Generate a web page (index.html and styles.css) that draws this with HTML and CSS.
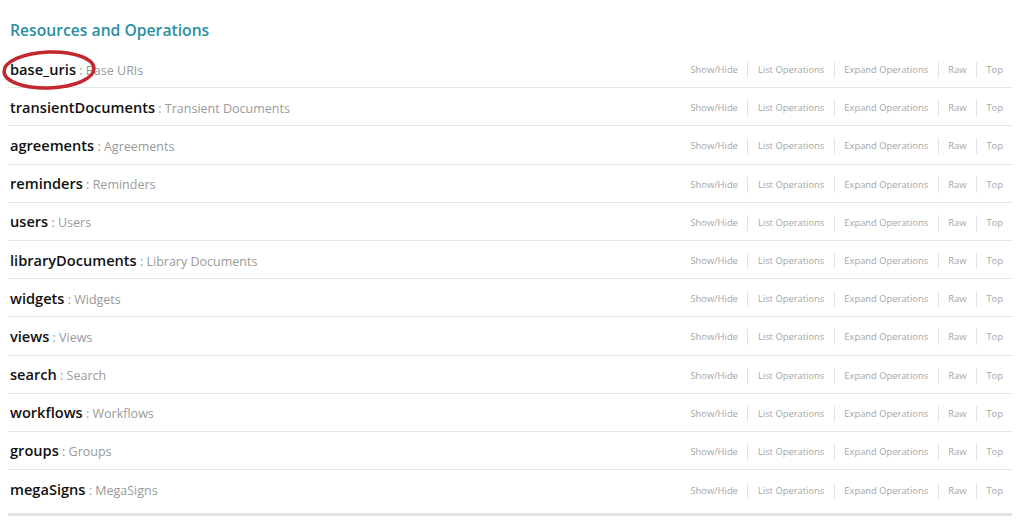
FILE: index.html
```html
<!DOCTYPE html>
<html>
<head>
<meta charset="utf-8">
<link rel="stylesheet" href="styles.css">
</head>
<body>
<div class="page">
  <h2 class="title">Resources and Operations</h2>
  <ul class="resources">
    <li class="row"><div class="heading"><span class="name">base_uris</span><span class="desc"> : Base URIs</span></div><ul class="ops"><li>Show/Hide</li><li>List Operations</li><li>Expand Operations</li><li>Raw</li><li>Top</li></ul>
      <svg class="circle" width="100" height="44" viewBox="0 0 100 44"><ellipse cx="49" cy="21" rx="45" ry="18" fill="none" stroke="#c3272e" stroke-width="3.5" transform="rotate(-2 49 21)"/></svg>
    </li>
    <li class="row"><div class="heading"><span class="name">transientDocuments</span><span class="desc"> : Transient Documents</span></div><ul class="ops"><li>Show/Hide</li><li>List Operations</li><li>Expand Operations</li><li>Raw</li><li>Top</li></ul></li>
    <li class="row"><div class="heading"><span class="name">agreements</span><span class="desc"> : Agreements</span></div><ul class="ops"><li>Show/Hide</li><li>List Operations</li><li>Expand Operations</li><li>Raw</li><li>Top</li></ul></li>
    <li class="row"><div class="heading"><span class="name">reminders</span><span class="desc"> : Reminders</span></div><ul class="ops"><li>Show/Hide</li><li>List Operations</li><li>Expand Operations</li><li>Raw</li><li>Top</li></ul></li>
    <li class="row"><div class="heading"><span class="name">users</span><span class="desc"> : Users</span></div><ul class="ops"><li>Show/Hide</li><li>List Operations</li><li>Expand Operations</li><li>Raw</li><li>Top</li></ul></li>
    <li class="row"><div class="heading"><span class="name">libraryDocuments</span><span class="desc"> : Library Documents</span></div><ul class="ops"><li>Show/Hide</li><li>List Operations</li><li>Expand Operations</li><li>Raw</li><li>Top</li></ul></li>
    <li class="row"><div class="heading"><span class="name">widgets</span><span class="desc"> : Widgets</span></div><ul class="ops"><li>Show/Hide</li><li>List Operations</li><li>Expand Operations</li><li>Raw</li><li>Top</li></ul></li>
    <li class="row"><div class="heading"><span class="name">views</span><span class="desc"> : Views</span></div><ul class="ops"><li>Show/Hide</li><li>List Operations</li><li>Expand Operations</li><li>Raw</li><li>Top</li></ul></li>
    <li class="row"><div class="heading"><span class="name">search</span><span class="desc"> : Search</span></div><ul class="ops"><li>Show/Hide</li><li>List Operations</li><li>Expand Operations</li><li>Raw</li><li>Top</li></ul></li>
    <li class="row"><div class="heading"><span class="name">workflows</span><span class="desc"> : Workflows</span></div><ul class="ops"><li>Show/Hide</li><li>List Operations</li><li>Expand Operations</li><li>Raw</li><li>Top</li></ul></li>
    <li class="row"><div class="heading"><span class="name">groups</span><span class="desc"> : Groups</span></div><ul class="ops"><li>Show/Hide</li><li>List Operations</li><li>Expand Operations</li><li>Raw</li><li>Top</li></ul></li>
    <li class="row last"><div class="heading"><span class="name">megaSigns</span><span class="desc"> : MegaSigns</span></div><ul class="ops"><li>Show/Hide</li><li>List Operations</li><li>Expand Operations</li><li>Raw</li><li>Top</li></ul></li>
  </ul>
</div>
</body>
</html>
```

FILE: styles.css
```css
html, body {
  margin: 0;
  padding: 0;
  background: #ffffff;
}
body {
  font-family: "Open Sans", "Noto Sans", sans-serif;
  color: #111;
}
.page {
  margin: 0 12px 0 8px;
  padding-top: 20px;
}
.title {
  margin: 0 0 0 2px;
  height: 30px;
  font-size: 15.7px;
  font-weight: 600;
  color: #2b8fa3;
  line-height: 20px;
}
.resources {
  list-style: none;
  margin: 0;
  padding: 0;
  border-bottom: 3px solid #e2e2e2;
}
.row {
  position: relative;
  display: flex;
  align-items: center;
  justify-content: space-between;
  height: 37.2px;
  border-bottom: 1px solid #e6e6e6;
  padding-left: 2px;
}
.row.last {
  height: 38px;
  border-bottom: 5px solid #fff;
}
.heading {
  white-space: nowrap;
}
.name {
  font-size: 14.6px;
  font-weight: 600;
  color: #111;
}
.desc {
  font-size: 12.5px;
  color: #9a9a9a;
}
.ops {
  list-style: none;
  margin: 3px 0 0 0;
  padding: 0;
  display: flex;
  align-items: center;
  font-size: 9.4px;
  color: #a6a6a6;
}
.ops li {
  padding: 0 9.5px;
  line-height: 16px;
  border-left: 1px solid #e2e2e2;
}
.ops li:first-child {
  border-left: none;
}
.ops li:last-child {
  padding-right: 9px;
}
.circle {
  position: absolute;
  left: -8px;
  top: -1px;
  pointer-events: none;
}
```
